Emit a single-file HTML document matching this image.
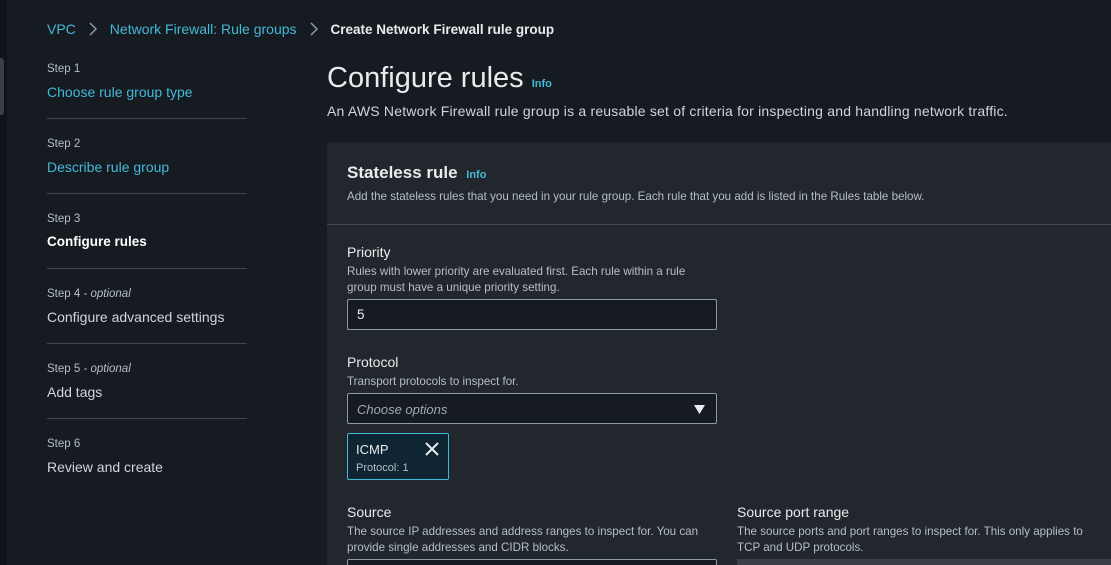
<!DOCTYPE html><html style="overflow:hidden;height:565px"><head><style>
body{margin:0;width:1111px;height:565px;overflow:hidden;background:#161a21;font-family:"Liberation Sans",sans-serif;color:#d1d5db;position:relative}
.a{position:absolute;white-space:nowrap}
.link{color:#44b9d6}
.step{font-size:11.5px;color:#b6bec9}
.sl{font-size:14px}
.hr{position:absolute;left:47px;width:200px;height:1px;background:#414750}
.lab{font-size:14px;color:#e9ebed}
.desc{font-size:11.6px;color:#b6bec9;line-height:16px}
.inp{position:absolute;background:#161b22;border:1px solid #8d99a8;border-radius:2px;box-sizing:border-box}
</style></head><body>
<div class="a" style="left:0;top:0;width:7px;height:565px;background:#0f1217"></div>
<div class="a" style="left:0;top:58px;width:4px;height:57px;background:#3a3e45;border-radius:0 3px 3px 0"></div>
<div class="a" style="top:21px;left:47px;font-size:14px"><span class="link">VPC</span><svg width="10" height="14" style="margin:0 12px 0 12px;vertical-align:-2px"><path d="M2 1L8 7L2 13" stroke="#8d99a8" stroke-width="1.5" fill="none"/></svg><span class="link">Network Firewall: Rule groups</span><svg width="10" height="14" style="margin:0 12px 0 12px;vertical-align:-2px"><path d="M2 1L8 7L2 13" stroke="#8d99a8" stroke-width="1.5" fill="none"/></svg><b style="color:#e9ebed;font-size:13.5px">Create Network Firewall rule group</b></div>

<div class="a step" style="left:47px;top:63px">Step 1</div><div class="a sl link" style="left:47px;top:84px">Choose rule group type</div><div class="hr" style="top:118px"></div>
<div class="a step" style="left:47px;top:138px">Step 2</div><div class="a sl link" style="left:47px;top:159px">Describe rule group</div><div class="hr" style="top:193px"></div>
<div class="a step" style="left:47px;top:213px">Step 3</div><div class="a sl" style="left:47px;top:234px;font-weight:bold;color:#fff;font-size:13.5px">Configure rules</div><div class="hr" style="top:268px"></div>
<div class="a step" style="left:47px;top:288px">Step 4 - <i>optional</i></div><div class="a sl" style="left:47px;top:309px">Configure advanced settings</div><div class="hr" style="top:343px"></div>
<div class="a step" style="left:47px;top:363px">Step 5 - <i>optional</i></div><div class="a sl" style="left:47px;top:384px">Add tags</div><div class="hr" style="top:418px"></div>
<div class="a step" style="left:47px;top:438px">Step 6</div><div class="a sl" style="left:47px;top:459px">Review and create</div>

<div class="a" style="left:327px;top:62px;font-size:29px;color:#e9ebed">Configure rules <span class="link" style="font-size:11px;font-weight:bold">Info</span></div>
<div class="a" style="left:327px;top:103px;font-size:14px;color:#d1d5db;letter-spacing:0.2px">An AWS Network Firewall rule group is a reusable set of criteria for inspecting and handling network traffic.</div>

<div class="a" style="left:327px;top:142px;width:790px;height:430px;background:#22262d"></div>
<div class="a" style="left:327px;top:224px;width:790px;height:1px;background:#414750"></div>
<div class="a" style="left:347px;top:163px;font-size:17px;font-weight:bold;color:#e9ebed">Stateless rule <span class="link" style="font-size:11px;margin-left:4px">Info</span></div>
<div class="a desc" style="left:347px;top:189px">Add the stateless rules that you need in your rule group. Each rule that you add is listed in the Rules table below.</div>

<div class="a lab" style="left:347px;top:244px">Priority</div>
<div class="a desc" style="left:347px;top:264px">Rules with lower priority are evaluated first. Each rule within a rule<br>group must have a unique priority setting.</div>
<div class="inp" style="left:347px;top:299px;width:370px;height:31px"><span class="a" style="left:9px;top:7px;font-size:13.5px;color:#e9ebed">5</span></div>

<div class="a lab" style="left:347px;top:354px">Protocol</div>
<div class="a desc" style="left:347px;top:374px">Transport protocols to inspect for.</div>
<div class="inp" style="left:347px;top:393px;width:370px;height:31px"><i class="a" style="left:9px;top:8px;font-size:13px;color:#a0a8b3">Choose options</i><svg class="a" style="right:11px;top:11px" width="11" height="9"><path d="M0 0H11L5.5 9Z" fill="#e9ebed"/></svg></div>
<div class="inp" style="left:347px;top:433px;width:102px;height:47px;background:#0f2533;border-color:#44b9d6"><span class="a" style="left:8px;top:8px;font-size:13px;color:#e9ebed">ICMP</span><span class="a" style="left:8px;top:28px;font-size:11px;color:#b6bec9">Protocol: 1</span>
<svg class="a" style="left:77px;top:8px" width="14" height="14"><path d="M1 1L13 13M13 1L1 13" stroke="#e9ebed" stroke-width="2"/></svg></div>

<div class="a lab" style="left:347px;top:504px">Source</div>
<div class="a desc" style="left:347px;top:524px">The source IP addresses and address ranges to inspect for. You can<br>provide single addresses and CIDR blocks.</div>
<div class="inp" style="left:347px;top:559px;width:370px;height:31px"></div>
<div class="a lab" style="left:737px;top:504px">Source port range</div>
<div class="a desc" style="left:737px;top:524px">The source ports and port ranges to inspect for. This only applies to<br>TCP and UDP protocols.</div>
<div class="a" style="left:737px;top:559px;width:380px;height:10px;background:#3a3f47"></div>
</body></html>
